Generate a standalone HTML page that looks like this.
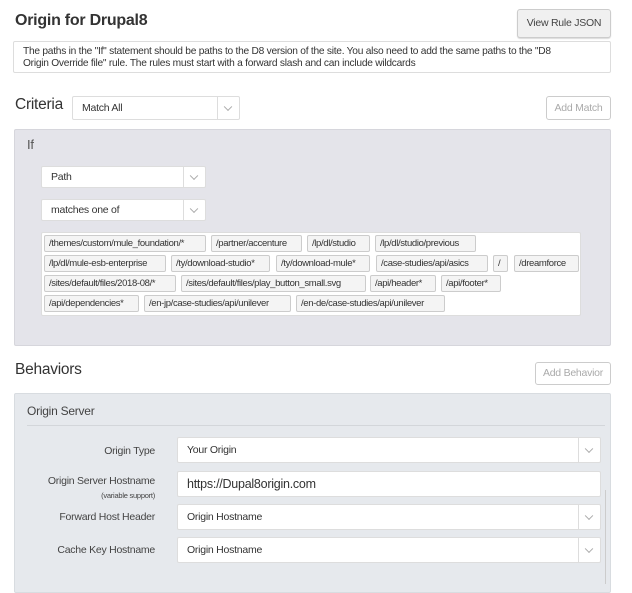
<!DOCTYPE html>
<html><head><style>
*{box-sizing:border-box;margin:0;padding:0}
body{width:632px;height:584px;background:#fff;font-family:"Liberation Sans",Arial,sans-serif;color:#333;position:relative;overflow:hidden;letter-spacing:-0.25px}
.a{position:absolute}
.btn{position:absolute;border:1px solid #ccc;border-radius:3px;background:#f3f3f3;font-size:10.5px;color:#444;text-align:center}
.sel{position:absolute;background:#fff;border:1px solid #ddd;border-radius:2px;font-size:10.5px;color:#333}
.sel span{position:absolute;left:9px;top:50%;transform:translateY(-50%)}
.sel i{position:absolute;right:0;top:0;bottom:0;width:22px;border-left:1px solid #ddd}
.sel i:after{content:"";position:absolute;left:7px;top:50%;width:5px;height:5px;border-right:1px solid #aaa;border-bottom:1px solid #aaa;transform:translateY(-70%) rotate(45deg)}
.tag{position:absolute;height:17px;border:1px solid #ccc;border-radius:2px;background:#f4f4f4;font-size:9.5px;letter-spacing:-0.35px;color:#333;line-height:15px;padding-left:4px;white-space:nowrap;overflow:hidden}
.lbl{position:absolute;right:477px;font-size:10.5px;color:#444;text-align:right;white-space:nowrap}
</style></head><body>
<div class="a" style="left:15px;top:12px;font-size:16px;font-weight:bold;color:#333">Origin for Drupal8</div>
<div class="btn" style="left:517px;top:9px;width:94px;height:29px;line-height:27px;background:#f0f0f0;box-shadow:0 1px 1px rgba(0,0,0,.15)">View Rule JSON</div>
<div class="a" style="left:13px;top:41px;width:598px;height:32px;border:1px solid #ddd;border-radius:2px;font-size:10.2px;line-height:12px;padding:4px 9px;color:#333;white-space:nowrap">The paths in the "If" statement should be paths to the D8 version of the site. You also need to add the same paths to the "D8<br>Origin Override file" rule. The rules must start with a forward slash and can include wildcards</div>
<div class="a" style="left:15px;top:96px;font-size:15.5px;color:#333">Criteria</div>
<div class="sel" style="left:72px;top:96px;width:168px;height:24px"><span>Match All</span><i></i></div>
<div class="btn" style="left:546px;top:96px;width:65px;height:24px;line-height:22px;background:#fff;color:#aaa">Add Match</div>
<div class="a" style="left:14px;top:129px;width:597px;height:217px;background:#e4e4ea;border:1px solid #d6d6dc;border-radius:2px"></div>
<div class="a" style="left:27px;top:137px;font-size:13px;color:#555">If</div>
<div class="sel" style="left:41px;top:166px;width:165px;height:22px"><span>Path</span><i></i></div>
<div class="sel" style="left:41px;top:199px;width:165px;height:22px"><span>matches one of</span><i></i></div>
<div class="a" style="left:41px;top:232px;width:540px;height:84px;background:#fff;border:1px solid #ddd;border-radius:2px"></div>
<div class="tag" style="left:44px;top:235px;width:162px">/themes/custom/mule_foundation/*</div>
<div class="tag" style="left:211px;top:235px;width:91px">/partner/accenture</div>
<div class="tag" style="left:307px;top:235px;width:63px">/lp/dl/studio</div>
<div class="tag" style="left:375px;top:235px;width:101px">/lp/dl/studio/previous</div>
<div class="tag" style="left:44px;top:255px;width:122px">/lp/dl/mule-esb-enterprise</div>
<div class="tag" style="left:171px;top:255px;width:99px">/ty/download-studio*</div>
<div class="tag" style="left:276px;top:255px;width:94px">/ty/download-mule*</div>
<div class="tag" style="left:376px;top:255px;width:112px">/case-studies/api/asics</div>
<div class="tag" style="left:493px;top:255px;width:15px">/</div>
<div class="tag" style="left:514px;top:255px;width:65px">/dreamforce</div>
<div class="tag" style="left:44px;top:275px;width:132px">/sites/default/files/2018-08/*</div>
<div class="tag" style="left:181px;top:275px;width:185px">/sites/default/files/play_button_small.svg</div>
<div class="tag" style="left:370px;top:275px;width:66px">/api/header*</div>
<div class="tag" style="left:441px;top:275px;width:60px">/api/footer*</div>
<div class="tag" style="left:44px;top:295px;width:95px">/api/dependencies*</div>
<div class="tag" style="left:144px;top:295px;width:147px">/en-jp/case-studies/api/unilever</div>
<div class="tag" style="left:296px;top:295px;width:149px">/en-de/case-studies/api/unilever</div>
<div class="a" style="left:15px;top:361px;font-size:15.5px;color:#333">Behaviors</div>
<div class="btn" style="left:535px;top:362px;width:76px;height:23px;line-height:21px;background:#fff;color:#aaa">Add Behavior</div>
<div class="a" style="left:14px;top:393px;width:597px;height:200px;background:#e6e9ed;border:1px solid #d8dce0;border-radius:2px"></div>
<div class="a" style="left:27px;top:404px;font-size:12px;color:#444">Origin Server</div>
<div class="a" style="left:27px;top:425px;width:578px;height:1px;background:#d3d6da"></div>
<div class="lbl" style="top:445px">Origin Type</div>
<div class="sel" style="left:177px;top:437px;width:424px;height:26px"><span>Your Origin</span><i></i></div>
<div class="lbl" style="top:475px">Origin Server Hostname</div>
<div class="lbl" style="top:491px;font-size:7.5px">(variable support)</div>
<div class="sel" style="left:177px;top:471px;width:424px;height:26px;font-size:12.5px"><span>https://Dupal8origin.com</span></div>
<div class="lbl" style="top:511px">Forward Host Header</div>
<div class="sel" style="left:177px;top:504px;width:424px;height:26px"><span>Origin Hostname</span><i></i></div>
<div class="lbl" style="top:544px">Cache Key Hostname</div>
<div class="sel" style="left:177px;top:537px;width:424px;height:26px"><span>Origin Hostname</span><i></i></div>
<div class="a" style="left:605px;top:490px;width:1px;height:94px;background:#ccc"></div>
</body></html>
